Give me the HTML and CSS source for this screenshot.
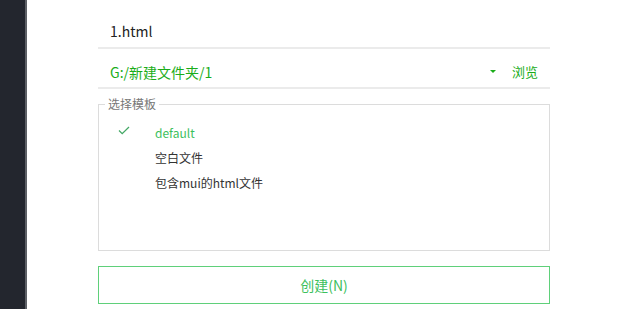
FILE: index.html
```
<!DOCTYPE html>
<html lang="zh-CN">
<head>
    <meta charset="UTF-8">
    <title>新建文件</title>
    <link rel="stylesheet" href="styles.css">
</head>
<body>
    <div class="sidebar"></div>

    <div class="main">
        <div class="row name-row">1.html</div>

        <div class="row path-row">
            <span class="path">G:/新建文件夹/1</span>
            <span class="caret"></span>
            <span class="browse">浏览</span>
        </div>

        <fieldset class="templates">
            <legend>选择模板</legend>
            <ul class="tpl-list">
                <li class="tpl active">
                    <span class="tick">
                        <svg width="12" height="9" viewBox="0 0 12 9"><path d="M1 4.5 L4.2 7.6 L11 1" fill="none" stroke="#44a866" stroke-width="1.3"/></svg>
                    </span>
                    default
                </li>
                <li class="tpl"><span class="tick"></span>空白文件</li>
                <li class="tpl"><span class="tick"></span>包含mui的html文件</li>
            </ul>
        </fieldset>

        <button class="btn create-btn">创建(N)</button>
    </div>
</body>
</html>
```

FILE: styles.css
```
body {
    margin: 0;
    display: flex;
    height: 309px;
    overflow: hidden;
    background: #fff;
    font-family: 'Noto Sans CJK SC', 'Noto Sans', sans-serif;
    color: #222;
}

.sidebar {
    width: 25px;
    background-color: #23262e;
    border-right: 2px solid #5d6066;
}

.main {
    flex: 1;
    padding: 0 70px 0 71px;
}

.row {
    display: flex;
    align-items: center;
    border-bottom: 2px solid #ebebeb;
    padding-left: 12px;
    font-size: 14px;
    line-height: 20px;
}

.name-row {
    height: 20px;
    padding-top: 21px;
    padding-bottom: 6px;
}

.path-row {
    height: 20px;
    padding-top: 13px;
    padding-bottom: 5px;
}

.path {
    flex: 1;
    color: #1aad19;
}

.caret {
    width: 0;
    height: 0;
    border-left: 3px solid transparent;
    border-right: 3px solid transparent;
    border-top: 3px solid #1aad19;
    margin-right: 16px;
    margin-top: -1px;
}

.browse {
    color: #1aad19;
    font-size: 13px;
    margin-right: 12px;
}

.templates {
    margin: 7px 0 0;
    padding: 8px 0 0 6px;
    border: 1px solid #dcdcdc;
}

.templates legend {
    padding: 0 3px;
    font-size: 12px;
    line-height: 16px;
    color: #777;
}

.tpl-list {
    list-style: none;
    margin: 0;
    padding: 0 0 0 13px;
    height: 130px;
}

.tpl {
    display: flex;
    align-items: center;
    height: 25px;
    font-size: 12px;
    color: #333;
}

.tpl.active {
    color: #3cc05c;
}

.tick {
    width: 37px;
    display: flex;
    align-items: center;
    margin-top: -4px;
}

.btn {
    display: block;
    width: 100%;
    height: 38px;
    margin-top: 15px;
    background: #fff;
    border: 1px solid #5fd07a;
    font-family: 'Noto Sans CJK SC', 'Noto Sans', sans-serif;
    font-size: 14px;
    color: #3cc05c;
    cursor: pointer;
}
```
